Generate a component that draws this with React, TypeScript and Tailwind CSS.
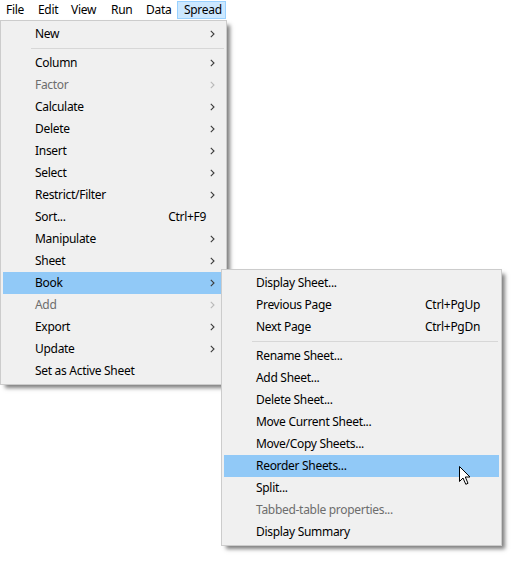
import React from "react";

type Item =
  | { sep: true }
  | { label: string; shortcut?: string; arrow?: boolean; disabled?: boolean; active?: boolean };

const mainItems: Item[] = [
  { label: "New", arrow: true },
  { sep: true },
  { label: "Column", arrow: true },
  { label: "Factor", arrow: true, disabled: true },
  { label: "Calculate", arrow: true },
  { label: "Delete", arrow: true },
  { label: "Insert", arrow: true },
  { label: "Select", arrow: true },
  { label: "Restrict/Filter", arrow: true },
  { label: "Sort...", shortcut: "Ctrl+F9" },
  { label: "Manipulate", arrow: true },
  { label: "Sheet", arrow: true },
  { label: "Book", arrow: true, active: true },
  { label: "Add", arrow: true, disabled: true },
  { label: "Export", arrow: true },
  { label: "Update", arrow: true },
  { label: "Set as Active Sheet" },
];

const subItems: Item[] = [
  { label: "Display Sheet..." },
  { label: "Previous Page", shortcut: "Ctrl+PgUp" },
  { label: "Next Page", shortcut: "Ctrl+PgDn" },
  { sep: true },
  { label: "Rename Sheet..." },
  { label: "Add Sheet..." },
  { label: "Delete Sheet..." },
  { label: "Move Current Sheet..." },
  { label: "Move/Copy Sheets..." },
  { label: "Reorder Sheets...", active: true },
  { label: "Split..." },
  { label: "Tabbed-table properties...", disabled: true },
  { label: "Display Summary" },
];

function Chevron({ disabled }: { disabled?: boolean }) {
  return (
    <svg width="5" height="8" viewBox="0 0 5 8" className="block">
      <path
        d="M0.8 0.8 L4 4 L0.8 7.2"
        fill="none"
        stroke={disabled ? "#b9b9b9" : "#3c3c3c"}
        strokeWidth="1.1"
      />
    </svg>
  );
}

function MenuList({ items, sub }: { items: Item[]; sub?: boolean }) {
  return (
    <>
      {items.map((it, i) => {
        if ("sep" in it) {
          return (
            <div
              key={i}
              className={`h-[7px] flex items-center ml-[28px] ${sub ? "mr-[1px]" : "mr-[-3px]"}`}
            >
              <div className="h-px w-full bg-[#d7d7d7]" />
            </div>
          );
        }
        return (
          <div
            key={i}
            className={`h-[22px] flex items-center pl-[32px] ${
              it.active ? "bg-[#91c9f7]" : ""
            } ${it.disabled ? "text-[#6d6d6d]" : "text-black"}`}
          >
            <span className="flex-1 whitespace-nowrap">{it.label}</span>
            {it.shortcut && <span className="whitespace-nowrap">{it.shortcut}</span>}
            <span className={`${sub ? "w-[19px]" : "w-[15px]"} flex items-center pl-[4px] shrink-0`}>
              {it.arrow && <Chevron disabled={it.disabled} />}
            </span>
          </div>
        );
      })}
    </>
  );
}

function Cursor() {
  return (
    <svg width="14" height="21" viewBox="0 0 14 21" className="absolute left-[458px] top-[465px]">
      <path
        d="M1.5 1.5 L1.5 16.5 L5 13 L7.8 19.3 L10 18.3 L7.3 12 L12 12 Z"
        fill="white"
        stroke="black"
        strokeWidth="1"
        strokeLinejoin="miter"
      />
    </svg>
  );
}

export default function App() {
  const bar = [
    { l: "File", w: "w-[31px] pl-[6px]" },
    { l: "Edit", w: "w-[33px] pl-[7px]" },
    { l: "View", w: "w-[40px] pl-[7px]" },
    { l: "Run", w: "w-[35px] pl-[7px]" },
    { l: "Data", w: "w-[38px] pl-[7px]" },
  ];
  return (
    <div
      className="relative w-[517px] h-[561px] bg-white overflow-hidden text-[12px] tracking-[-0.3px] text-black"
      style={{ fontFamily: '"Segoe UI", "Noto Sans", sans-serif' }}
    >
      <div className="h-[20px] flex items-start">
        {bar.map((b) => (
          <div key={b.l} className={`${b.w} h-[19px] flex items-center`}>
            {b.l}
          </div>
        ))}
        <div className="w-[49px] h-[18px] mt-[1px] flex items-center pl-[6px] bg-[#cce8ff] border border-[#99d1ff]">
          Spread
        </div>
      </div>

      <div className="absolute left-0 top-[20px] w-[227px] bg-[#f0f0f0] border border-[#cccccc] pl-[2px] pr-[5px] py-[2px] shadow-[4px_4px_4px_-1px_rgba(0,0,0,0.5)]">
        <MenuList items={mainItems} />
      </div>

      <div className="absolute left-[221px] top-[269px] w-[281px] bg-[#f0f0f0] border border-[#cccccc] px-[2px] py-[2px] shadow-[4px_4px_4px_-1px_rgba(0,0,0,0.5)]">
        <MenuList items={subItems} sub />
      </div>

      <Cursor />
    </div>
  );
}
